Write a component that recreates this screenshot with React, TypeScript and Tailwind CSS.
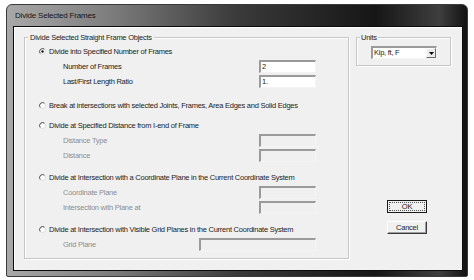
import React from "react"

const Radio = ({ on }: { on?: boolean }) => (
  <svg width="7" height="7" viewBox="0 0 7 7" className="shrink-0">
    <circle cx="3.5" cy="3.5" r="3" fill="#fff" />
    <path d="M1.38 5.62 A3 3 0 0 1 5.62 1.38" fill="none" stroke="#3c3c3c" strokeWidth="1" />
    <path d="M5.62 1.38 A3 3 0 0 1 1.38 5.62" fill="none" stroke="#d8d8d8" strokeWidth="1" />
    {on && <circle cx="3.5" cy="3.5" r="1.2" fill="#111" />}
  </svg>
)

const Field = ({ value, enabled, w }: { value?: string; enabled?: boolean; w: string }) => (
  <div
    className={`${w} h-[13px] border-t-[2px] border-l-[2px] border-b border-r border-t-[#9a9a9a] border-l-[#9a9a9a] border-b-[#f4f4f4] border-r-[#f4f4f4] flex items-center pl-[1px] ${
      enabled ? "bg-white" : "bg-[#f0f0f0]"
    }`}
  >
    {value}
  </div>
)

const SubRow = ({
  label,
  value,
  enabled,
}: {
  label: string
  value?: string
  enabled?: boolean
}) => (
  <div className="h-[15px] flex items-center pl-[24px]">
    <span className={`w-[196px] ${enabled ? "text-[#1c1c1c]" : "text-[#8e8e8e]"}`}>{label}</span>
    <Field value={value} enabled={enabled} w="w-[57px]" />
  </div>
)

const RadioRow = ({ label, on, className = "" }: { label: string; on?: boolean; className?: string }) => (
  <div className={`h-[15px] flex items-center gap-[3px] ${className}`}>
    <Radio on={on} />
    <span>{label}</span>
  </div>
)

const App = () => {
  return (
    <div className="w-[474px] h-[280px] bg-white overflow-hidden pt-[4px] pl-[6px] font-['Liberation_Sans',Arial,sans-serif] text-[7.5px] tracking-[-0.25px] text-[#1c1c1c]">
      <div className="w-[462px] h-[273px] rounded-t-[6px] rounded-b-[2px] border border-[#3a3a3a] bg-[linear-gradient(90deg,#a8a8a8_0%,#7e7e7e_22%,#3a3a3a_50%,#161616_80%,#3e3e3e_94%,#121212_100%)] flex flex-col pl-[7px] pr-[5px] pb-[6px]">
        <div className="h-[22px] flex items-center pl-[1px] text-[8px] tracking-[-0.2px] text-[#151515]">
          Divide Selected Frames
        </div>
        <div className="flex-1 bg-[#f0f0f0] shadow-[0_0_0_1px_#0c0c0c,inset_1px_1px_0_#ffffff] flex pt-[10px] pl-[10px]">
          {/* main group */}
          <div className="relative w-[325px] h-[222px] border border-[#c6c6c6] shadow-[inset_1px_1px_0_#fff,1px_1px_0_#fff] pt-[6px] pl-[14px]">
            <span className="absolute left-[3px] top-[-5px] px-[2px] leading-[9px] bg-[#f0f0f0]">
              Divide Selected Straight Frame Objects
            </span>
            <RadioRow label="Divide into Specified Number of Frames" on />
            <SubRow label="Number of Frames" value="2" enabled />
            <SubRow label="Last/First Length Ratio" value="1." enabled />
            <RadioRow
              className="mt-[9px]"
              label="Break at intersections with selected Joints, Frames, Area Edges and Solid Edges"
            />
            <RadioRow className="mt-[5px]" label="Divide at Specified Distance from I-end of Frame" />
            <SubRow label="Distance Type" />
            <SubRow label="Distance" />
            <RadioRow
              className="mt-[7px]"
              label="Divide at Intersection with a Coordinate Plane in the Current Coordinate System"
            />
            <SubRow label="Coordinate Plane" />
            <SubRow label="Intersection with Plane at" />
            <RadioRow
              className="mt-[7px]"
              label="Divide at Intersection with Visible Grid Planes in the Current Coordinate System"
            />
            <div className="h-[15px] flex items-center pl-[24px]">
              <span className="w-[136px] text-[#8e8e8e]">Grid Plane</span>
              <Field w="w-[117px]" />
            </div>
          </div>

          {/* right column */}
          <div className="ml-[7px] w-[95px] flex flex-col">
            <div className="relative h-[29px] border border-[#c6c6c6] shadow-[inset_1px_1px_0_#fff,1px_1px_0_#fff] pt-[8px] pl-[14px]">
              <span className="absolute left-[3px] top-[-5px] px-[1px] leading-[9px] bg-[#f0f0f0]">Units</span>
              <div className="w-[66px] h-[13px] bg-white border-t-[2px] border-l-[2px] border-b border-r border-t-[#9a9a9a] border-l-[#9a9a9a] border-b-[#f4f4f4] border-r-[#f4f4f4] flex items-center">
                <span className="flex-1 pl-[1px]">Kip, ft, F</span>
                <span className="w-[10px] h-full bg-[#ececec] border-t border-l border-t-white border-l-white border-b border-r border-b-[#6a6a6a] border-r-[#6a6a6a] flex items-center justify-center">
                  <svg width="5" height="3" viewBox="0 0 5 3">
                    <path d="M0 0 H5 L2.5 3 Z" fill="#000" />
                  </svg>
                </span>
              </div>
            </div>
            <button className="ml-[31px] mt-[134px] w-[40px] h-[13px] border border-[#1a1a1a] bg-[#f0f0f0] p-[1px] flex">
              <span className="flex-1 border border-dotted border-[#555] flex items-center justify-center leading-none">
                OK
              </span>
            </button>
            <button className="ml-[31px] mt-[8px] w-[40px] h-[13px] bg-[#f0f0f0] border border-t-white border-l-white border-b-[#3a3a3a] border-r-[#3a3a3a] flex items-center justify-center leading-none shadow-[inset_-1px_-1px_0_#a0a0a0]">
              Cancel
            </button>
          </div>
        </div>
      </div>
    </div>
  )
}

export default App
